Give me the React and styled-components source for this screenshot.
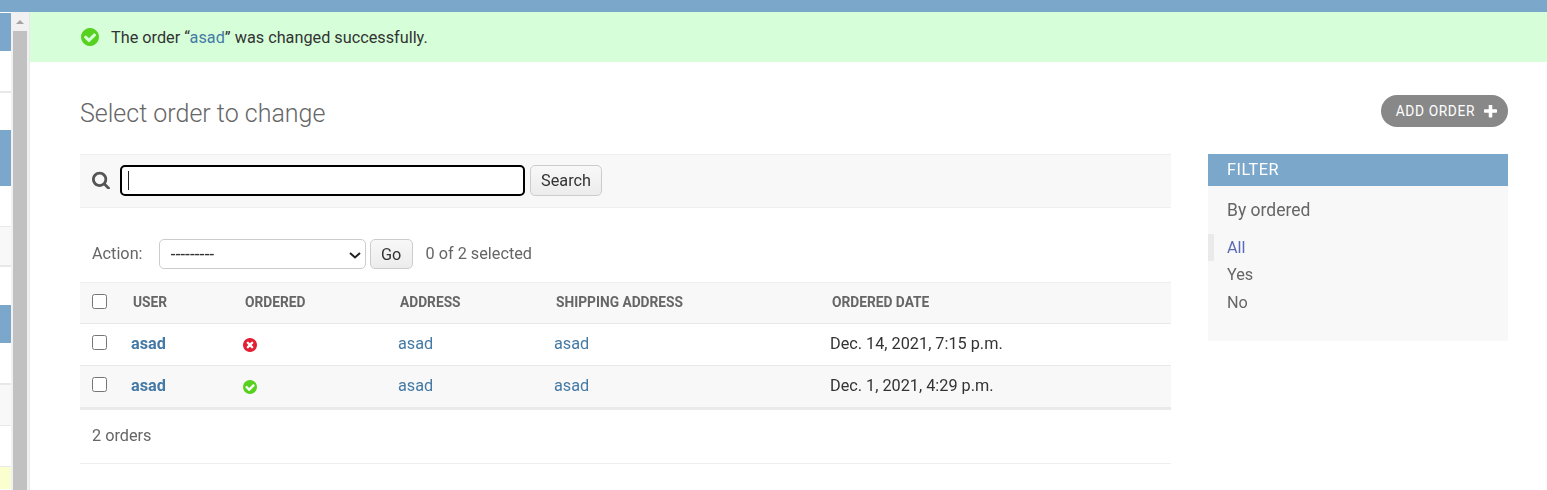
import React from "react";
import styled, { createGlobalStyle } from "styled-components";

const GlobalStyle = createGlobalStyle`
    html, body {
        margin: 0;
        height: 100%;
        overflow: hidden;
        background: #fff;
    }
    body {
        font-family: Roboto, "Liberation Sans", sans-serif;
        font-size: 16.25px;
        color: #333;
    }
`;

const TopBar = styled.div`
    height: 12px;
    background: #7ba7cb;
`;

const Shell = styled.div`
    display: flex;
    height: 478px;
    overflow: hidden;
`;

const NavStrip = styled.div`
    width: 11px;
    flex: none;
    display: flex;
    flex-direction: column;
`;

const NavPiece = styled.div`
    height: ${(p) => p.$h}px;
    flex: none;
    box-sizing: border-box;
    background: ${(p) => p.$bg || "#fff"};
    border-bottom: ${(p) => (p.$line ? `${p.$line}px solid #e8e8e8` : "none")};
`;

const Scrollbar = styled.div`
    width: 19px;
    flex: none;
    box-sizing: border-box;
    padding: 0 2px;
    background: #f1f1f1;
    border-right: 1px solid #e8e8e8;
    display: flex;
    flex-direction: column;
`;

const ScrollArrow = styled.div`
    height: 19px;
    flex: none;
    display: flex;
    align-items: center;
    justify-content: center;

    &::before {
        content: "";
        border-left: 4px solid transparent;
        border-right: 4px solid transparent;
        border-bottom: 4px solid #a3a3a3;
    }
`;

const ScrollThumb = styled.div`
    flex: 1;
    width: 14px;
    background: #c1c1c1;
`;

const Main = styled.main`
    flex: 1;
    min-width: 0;
`;

const Message = styled.div`
    height: 50px;
    box-sizing: border-box;
    background: #d6ffd9;
    padding-left: 51px;
    display: flex;
    align-items: center;
    gap: 12px;
    color: #333;
`;

const Content = styled.div`
    padding: 33px 39px 0 50px;
`;

const HeadRow = styled.div`
    display: flex;
    justify-content: space-between;
    align-items: center;
    height: 32px;
    margin-bottom: 27px;
`;

const Title = styled.h1`
    margin: 4px 0 0;
    font-size: 25px;
    font-weight: 300;
    color: #666;
`;

const AddButton = styled.a`
    height: 32px;
    box-sizing: border-box;
    padding: 0 11px 0 15px;
    display: flex;
    align-items: center;
    gap: 9px;
    border-radius: 16px;
    background: #888;
    color: #fff;
    font-size: 13.75px;
    letter-spacing: 0.625px;
`;

const Columns = styled.div`
    display: flex;
    align-items: flex-start;
    gap: 37px;
`;

const ListColumn = styled.div`
    width: 1091px;
    flex: none;
`;

const Toolbar = styled.form`
    height: 54px;
    box-sizing: border-box;
    display: flex;
    align-items: center;
    padding: 0 0 2px 12px;
    background: #f8f8f8;
    border-top: 1px solid #eee;
    border-bottom: 1px solid #eee;
`;

const SearchInput = styled.input`
    width: 405px;
    height: 31px;
    box-sizing: border-box;
    margin: 0 5px 0 10px;
    padding: 2px 7px;
    background: linear-gradient(#222, #222) 6px center / 1px 19px no-repeat #fff;
    border: 2px solid #000;
    border-radius: 5px;
    outline: none;
    caret-color: transparent;
    font-family: inherit;
    font-size: 16.25px;
    color: #333;
`;

const GrayButton = styled.button`
    width: ${(p) => p.$w}px;
    height: ${(p) => p.$h}px;
    box-sizing: border-box;
    padding: 0;
    background: linear-gradient(#f8f8f8, #ececec);
    border: 1px solid #ccc;
    border-radius: 5px;
    font-family: inherit;
    font-size: 16.25px;
    color: #333;
`;

const Actions = styled.div`
    height: 30px;
    margin: 31px 0 13px;
    padding-left: 12px;
    display: flex;
    align-items: center;
    color: #666;
`;

const ActionLabel = styled.span`
    margin-bottom: 2px;
`;

const chevron = encodeURIComponent(
    '<svg xmlns="http://www.w3.org/2000/svg" width="12" height="7"><path d="M1 1l5 4.500 5-4.500" fill="none" stroke="#222" stroke-width="2"/></svg>'
);

const ActionSelect = styled.select`
    appearance: none;
    width: 207px;
    height: 30px;
    box-sizing: border-box;
    margin: 0 4px 0 16px;
    padding: 0 11px;
    background: url("data:image/svg+xml,${chevron}") 189px 12px no-repeat #fff;
    border: 1px solid #ccc;
    border-radius: 5px;
    font-family: inherit;
    font-size: 17.5px;
    color: #333;
`;

const Counter = styled(ActionLabel)`
    margin-left: 13px;
`;

const Table = styled.table`
    width: 1091px;
    table-layout: fixed;
    border-collapse: separate;
    border-spacing: 0;
    border-bottom: 3px solid #eaeaea;
`;

const HeadCell = styled.th`
    width: ${(p) => p.$w}px;
    height: 42px;
    box-sizing: border-box;
    padding: 0 0 2px ${(p) => p.$pad ?? 12}px;
    background: #f8f8f8;
    border-top: 1px solid #eee;
    border-bottom: 1px solid #e8e8e8;
    text-align: left;
    font-size: 13.75px;
    font-weight: 700;
    text-transform: uppercase;
    color: #666;
`;

const Row = styled.tr`
    background: ${(p) => (p.$alt ? "#f8f8f8" : "#fff")};
`;

const Cell = styled.td`
    height: ${(p) => (p.$last ? 41 : 42)}px;
    box-sizing: border-box;
    padding: 10px 0 0 ${(p) => p.$pad ?? 10}px;
    vertical-align: top;
    line-height: 19px;
    border-bottom: ${(p) => (p.$last ? "none" : "1px solid #e8e8e8")};
    color: #333;
`;

const Check = styled.input.attrs({ type: "checkbox" })`
    display: block;
    width: 15px;
    height: 15px;
    margin: ${(p) => (p.$head ? "-2px" : "1px")} 0 0 12px;
`;

const StatusMark = styled.div`
    padding-top: 4px;
    line-height: 0;
`;

const Link = styled.a`
    color: #447aa5;
    font-weight: ${(p) => (p.$bold ? 700 : 400)};
`;

const Paginator = styled.div`
    height: 54px;
    box-sizing: border-box;
    padding: 0 0 2px 12px;
    display: flex;
    align-items: center;
    color: #666;
    border-bottom: 1px solid #eee;
`;

const Filter = styled.aside`
    width: 300px;
    flex: none;
    height: 187px;
    background: #f8f8f8;
`;

const FilterHead = styled.h2`
    margin: 0;
    height: 32px;
    box-sizing: border-box;
    padding: 0 0 2px 19px;
    display: flex;
    align-items: center;
    background: #7ba7cb;
    color: #fff;
    font-size: 16.25px;
    font-weight: 400;
    letter-spacing: 0.5px;
`;

const FilterTitle = styled.h3`
    margin: 0;
    padding: 15px 0 14px 19px;
    font-size: 17.5px;
    line-height: 19px;
    font-weight: 400;
    color: #666;
`;

const FilterList = styled.ul`
    margin: 0;
    padding: 0;
    list-style: none;
`;

const FilterItem = styled.li`
    height: ${(p) => p.$h}px;
    box-sizing: border-box;
    padding-left: ${(p) => (p.$selected ? 13 : 19)}px;
    display: flex;
    align-items: center;
    border-left: ${(p) => (p.$selected ? "6px solid #eaeaea" : "none")};
    color: ${(p) => (p.$selected ? "#5a69b8" : "#666")};
`;

const navPieces = [
    { h: 1, bg: "#fff" },
    { h: 38, bg: "#7ba7cb" },
    { h: 42, line: 2 },
    { h: 37 },
    { h: 56, bg: "#7ba7cb" },
    { h: 41, line: 1 },
    { h: 40, bg: "#f8f8f8", line: 2 },
    { h: 38 },
    { h: 38, bg: "#7ba7cb" },
    { h: 42, line: 2 },
    { h: 41, bg: "#f8f8f8", line: 1 },
    { h: 41, line: 1 },
    { h: 22, bg: "#fbffd0" },
];

const YesIcon = ({ size }) => (
    <svg width={size} height={size} viewBox="128 128 1536 1536" style={{ flex: "none" }}>
        <path fill="#57d11f" d="M1412 734q0-28-18-46l-91-90q-19-19-45-19t-45 19l-408 407-226-226q-19-19-45-19t-45 19l-91 90q-18 18-18 46 0 27 18 45l362 362q19 19 45 19 27 0 46-19l543-543q18-18 18-45zm252 162q0 209-103 385.500t-279.500 279.500-385.500 103-385.500-103-279.500-279.500-103-385.500 103-385.500 279.500-279.500 385.500-103 385.500 103 279.500 279.500 103 385.500z" />
    </svg>
);

const NoIcon = ({ size }) => (
    <svg width={size} height={size} viewBox="128 128 1536 1536" style={{ flex: "none" }}>
        <path fill="#e32033" d="M1277 1122q0-26-19-45l-181-181 181-181q19-19 19-45 0-27-19-46l-90-90q-19-19-46-19-26 0-45 19l-181 181-181-181q-19-19-45-19-27 0-46 19l-90 90q-19 19-19 46 0 26 19 45l181 181-181 181q-19 19-19 45 0 27 19 46l90 90q19 19 46 19 26 0 45-19l181-181 181 181q19 19 45 19 27 0 46-19l90-90q19-19 19-46zm387-226q0 209-103 385.500t-279.500 279.500-385.500 103-385.500-103-279.500-279.500-103-385.500 103-385.500 279.500-279.500 385.500-103 385.500 103 279.500 279.500 103 385.500z" />
    </svg>
);

const SearchIcon = () => (
    <svg width="18" height="18" viewBox="64 64 1664 1664" style={{ flex: "none" }}>
        <path fill="#555" d="M1216 832q0-185-131.500-316.500t-316.500-131.500-316.500 131.500-131.500 316.500 131.500 316.500 316.500 131.500 316.500-131.500 131.500-316.500zm512 832q0 52-38 90t-90 38q-54 0-90-38l-343-342q-179 124-399 124-143 0-273.500-55.500t-225-150-150-225-55.500-273.500 55.500-273.500 150-225 225-150 273.500-55.500 273.500 55.500 225 150 150 225 55.500 273.500q0 220-124 399l343 343q37 37 37 90z" />
    </svg>
);

const PlusIcon = () => (
    <svg width="13" height="13" viewBox="192 192 1408 1408" style={{ flex: "none" }}>
        <path fill="#fff" d="M1600 736v192q0 40-28 68t-68 28h-416v416q0 40-28 68t-68 28h-192q-40 0-68-28t-28-68v-416h-416q-40 0-68-28t-28-68v-192q0-40 28-68t68-28h416v-416q0-40 28-68t68-28h192q40 0 68 28t28 68v416h416q40 0 68 28t28 68z" />
    </svg>
);

const orders = [
    { ordered: false, date: "Dec. 14, 2021, 7:15 p.m." },
    { ordered: true, date: "Dec. 1, 2021, 4:29 p.m." },
];

export default function App() {
    return (
        <>
            <GlobalStyle />
            <TopBar />
            <Shell>
                <NavStrip>
                    {navPieces.map((piece, i) => (
                        <NavPiece key={i} $h={piece.h} $bg={piece.bg} $line={piece.line} />
                    ))}
                </NavStrip>
                <Scrollbar>
                    <ScrollArrow />
                    <ScrollThumb />
                </Scrollbar>
                <Main>
                    <Message>
                        <YesIcon size={18} />
                        <span>The order “<Link>asad</Link>” was changed successfully.</span>
                    </Message>
                    <Content>
                        <HeadRow>
                            <Title>Select order to change</Title>
                            <AddButton>ADD ORDER <PlusIcon /></AddButton>
                        </HeadRow>
                        <Columns>
                            <ListColumn>
                                <Toolbar>
                                    <SearchIcon />
                                    <SearchInput autoFocus />
                                    <GrayButton type="button" $w={72} $h={31}>Search</GrayButton>
                                </Toolbar>
                                <Actions>
                                    <ActionLabel>Action:</ActionLabel>
                                    <ActionSelect defaultValue="">
                                        <option value="">---------</option>
                                    </ActionSelect>
                                    <GrayButton type="button" $w={43} $h={30}>Go</GrayButton>
                                    <Counter>0 of 2 selected</Counter>
                                </Actions>
                                <Table>
                                    <thead>
                                        <tr>
                                            <HeadCell $w={41} $pad={0}><Check $head /></HeadCell>
                                            <HeadCell $w={112}>User</HeadCell>
                                            <HeadCell $w={155}>Ordered</HeadCell>
                                            <HeadCell $w={156}>Address</HeadCell>
                                            <HeadCell $w={276}>Shipping address</HeadCell>
                                            <HeadCell $w={351}>Ordered date</HeadCell>
                                        </tr>
                                    </thead>
                                    <tbody>
                                        {orders.map((order, i) => {
                                            const last = i === orders.length - 1;
                                            return (
                                                <Row key={order.date} $alt={i % 2 === 1}>
                                                    <Cell $pad={0} $last={last}><Check /></Cell>
                                                    <Cell $last={last}><Link $bold>asad</Link></Cell>
                                                    <Cell $last={last}>
                                                        <StatusMark>
                                                            {order.ordered ? <YesIcon size={14} /> : <NoIcon size={14} />}
                                                        </StatusMark>
                                                    </Cell>
                                                    <Cell $last={last}><Link>asad</Link></Cell>
                                                    <Cell $last={last}><Link>asad</Link></Cell>
                                                    <Cell $last={last}>{order.date}</Cell>
                                                </Row>
                                            );
                                        })}
                                    </tbody>
                                </Table>
                                <Paginator>2 orders</Paginator>
                            </ListColumn>
                            <Filter>
                                <FilterHead>FILTER</FilterHead>
                                <FilterTitle>By ordered</FilterTitle>
                                <FilterList>
                                    <FilterItem $selected $h={27}>All</FilterItem>
                                    <FilterItem $h={27}>Yes</FilterItem>
                                    <FilterItem $h={28}>No</FilterItem>
                                </FilterList>
                            </Filter>
                        </Columns>
                    </Content>
                </Main>
            </Shell>
        </>
    );
}
